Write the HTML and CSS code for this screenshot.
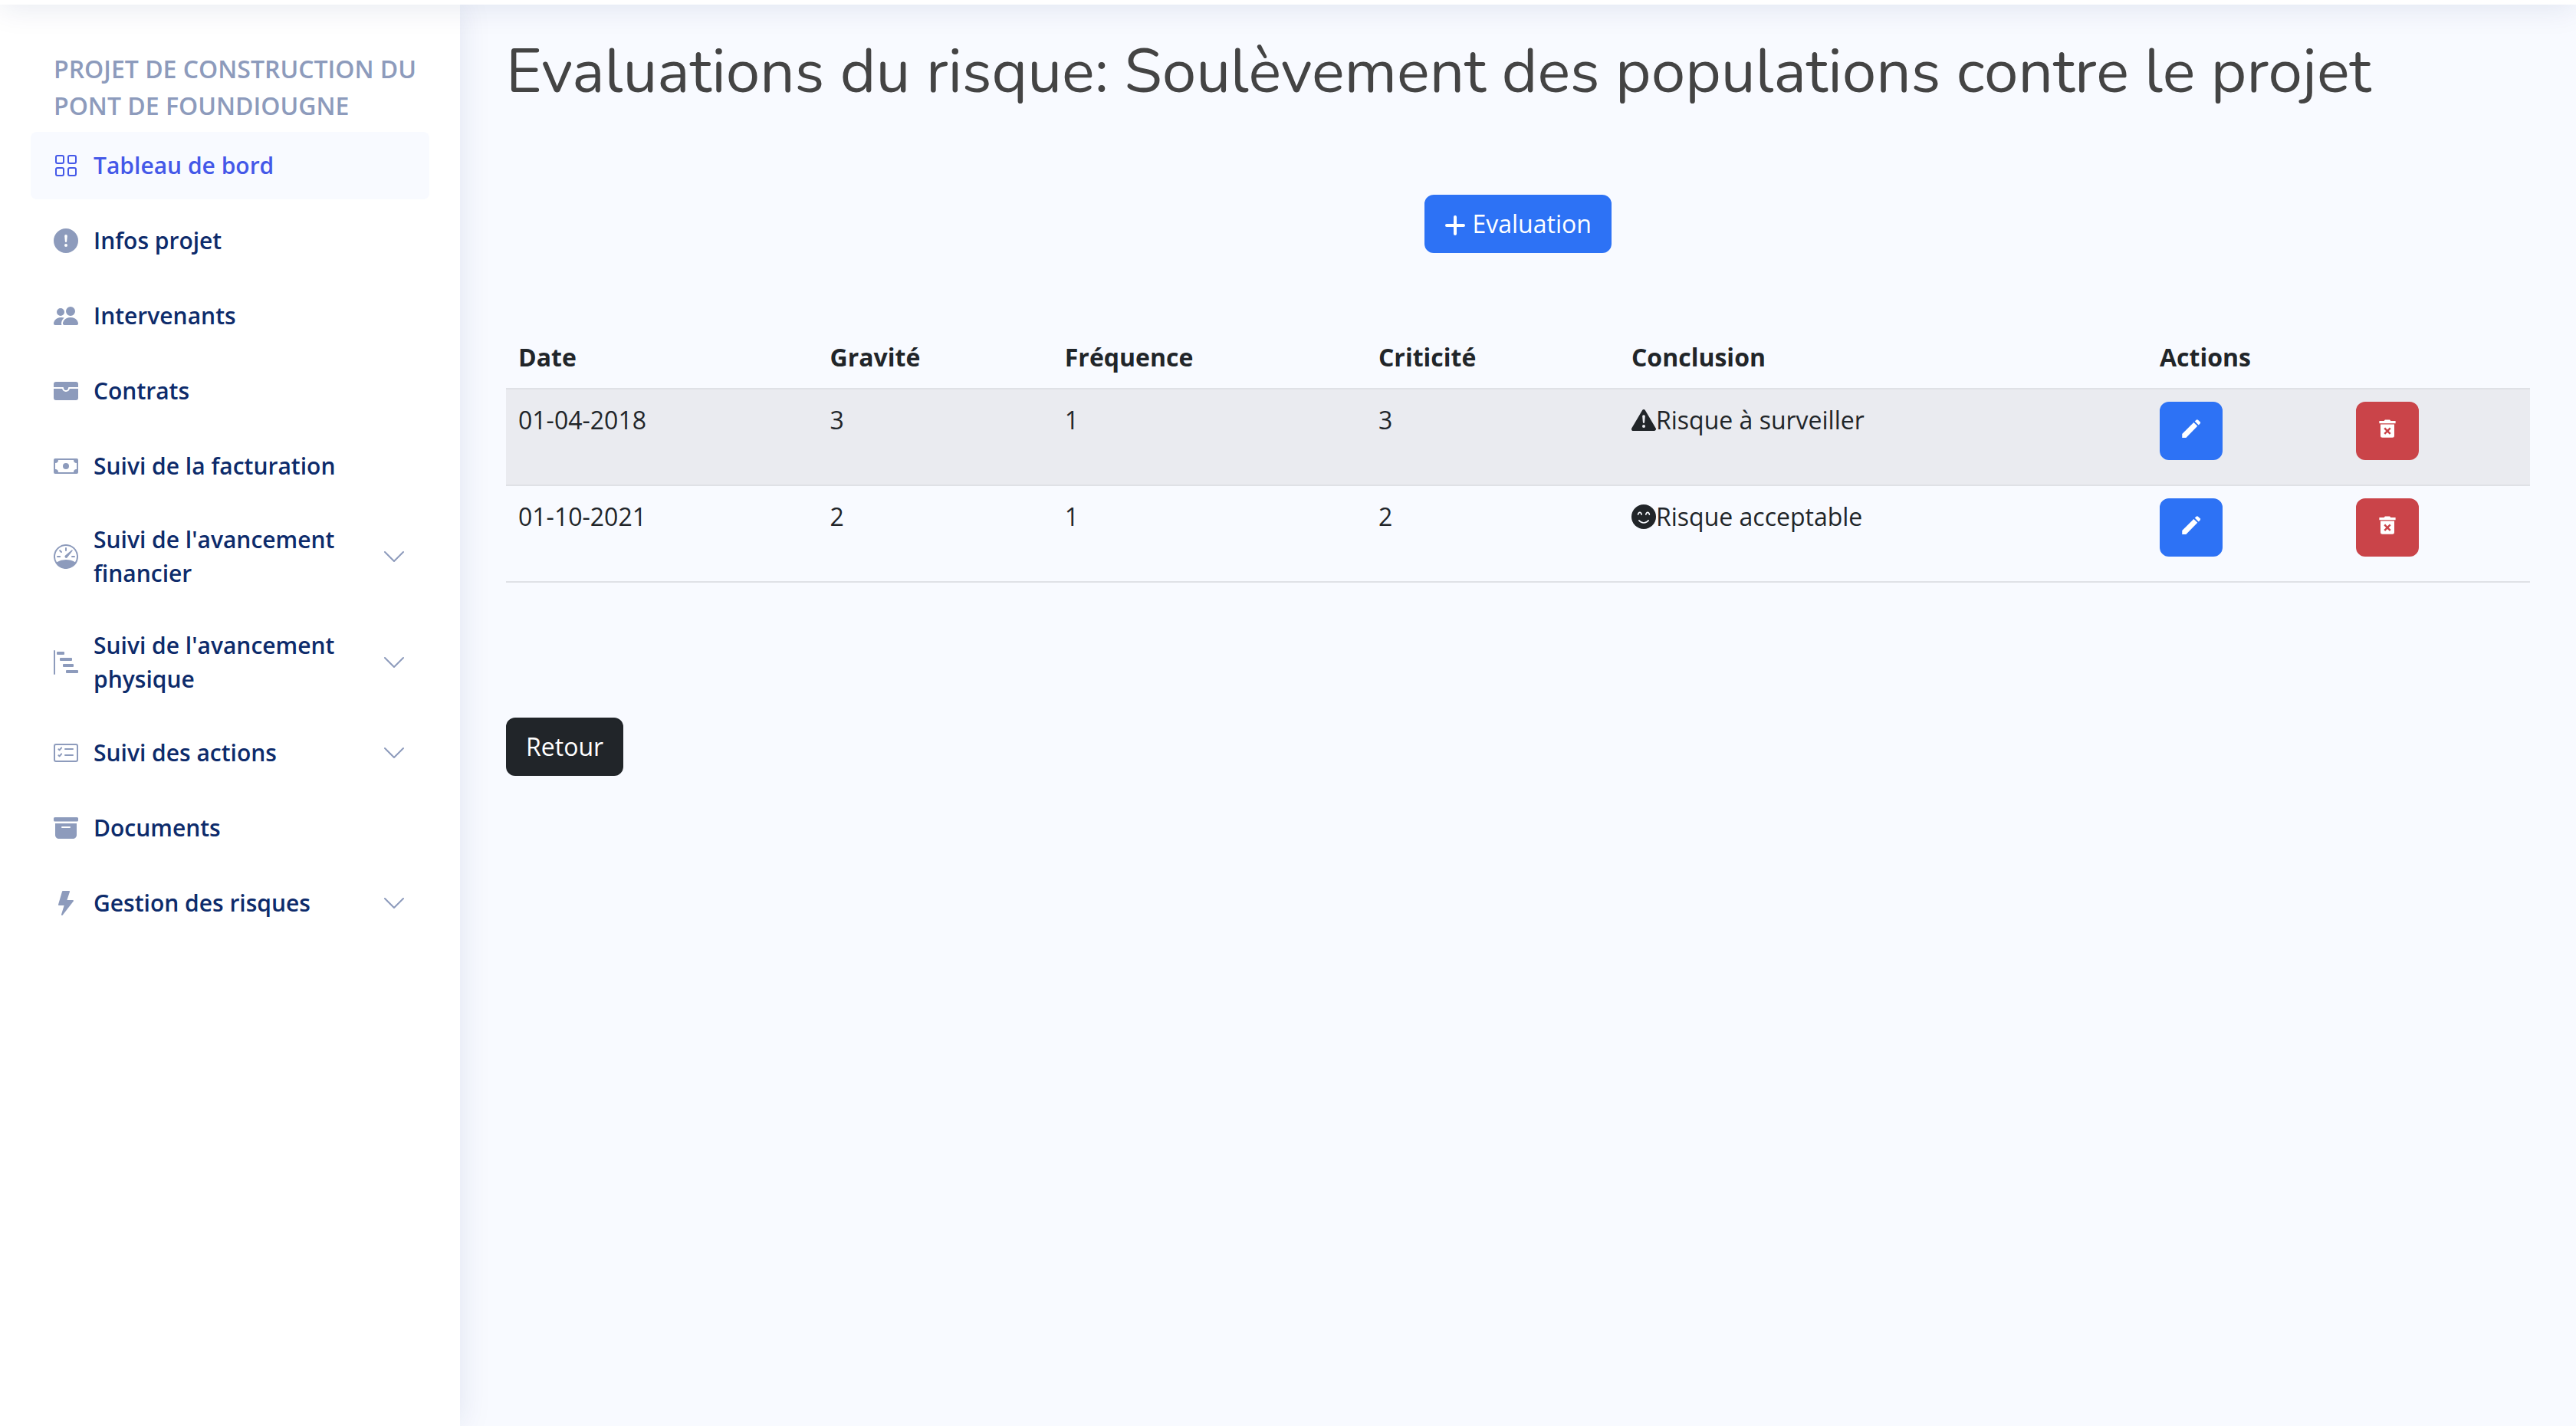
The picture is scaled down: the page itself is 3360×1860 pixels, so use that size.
FILE: index.html
```html
<!DOCTYPE html>
<html lang="fr">
<head>
	<meta charset="UTF-8" />
	<meta name="viewport" content="width=device-width, initial-scale=1.0" />
	<title>Evaluations du risque</title>
	<link rel="stylesheet" href="styles.css">
</head>
<body>
	<!-- shared icons -->
	<svg class="sprite" aria-hidden="true">
		<symbol id="chevron-down" viewBox="0 0 16 16">
			<path fill="none" stroke="currentColor" stroke-linecap="round" stroke-linejoin="round" d="M2 5l6 6 6-6" />
		</symbol>
		<symbol id="pencil" viewBox="0 0 24 24">
			<path d="M14.700 5.500L2.600 17.500V21.500h4.100L18.600 9.400z" />
			<path d="M15.800 4.400l1.600-1.500q.9-.8 1.800 0l2.100 2.100q.8.900 0 1.800l-1.500 1.500z" />
		</symbol>
		<symbol id="trash" viewBox="0 0 24 24">
			<path d="M3.500 4h5l1-1.200h5l1 1.200h5v2.600h-17z" />
			<path fill-rule="evenodd" d="M4.800 7.600h14.400v11.800a2 2 0 0 1-2 2H6.800a2 2 0 0 1-2-2zM8.300 12.200l2.300 2.300-2.300 2.300 1.400 1.400 2.300-2.300 2.300 2.300 1.400-1.400-2.300-2.300 2.300-2.300-1.400-1.400-2.300 2.300-2.300-2.300z" />
		</symbol>
	</svg>

	<header class="header"></header>

	<div class="wrapper">
		<aside class="sidebar">
			<h2 class="nav-heading">Projet de construction du pont de Foundiougne</h2>
			<nav class="sidebar-nav">
				<a class="nav-link active" href="#">
					<svg class="icon" viewBox="0 0 16 16"><g fill="none" stroke="currentColor"><rect x="1.500" y="1.500" width="5" height="5" rx="1" /><rect x="9.500" y="1.500" width="5" height="5" rx="1" /><rect x="1.500" y="9.500" width="5" height="5" rx="1" /><rect x="9.500" y="9.500" width="5" height="5" rx="1" /></g></svg>
					<span>Tableau de bord</span>
				</a>
				<a class="nav-link" href="#">
					<svg class="icon" viewBox="0 0 16 16"><path d="M16 8A8 8 0 1 1 0 8a8 8 0 0 1 16 0M8 4a.905.905 0 0 0-.9.995l.35 3.507a.552.552 0 0 0 1.100 0l.350-3.507A.905.905 0 0 0 8 4m.002 6a1 1 0 1 0 0 2 1 1 0 0 0 0-2" /></svg>
					<span>Infos projet</span>
				</a>
				<a class="nav-link" href="#">
					<svg class="icon" viewBox="0 0 16 16"><path d="M7 14s-1 0-1-1 1-4 5-4 5 3 5 4-1 1-1 1zm4-6a3 3 0 1 0 0-6 3 3 0 0 0 0 6m-5.784 6A2.240 2.240 0 0 1 5 13c0-1.355.680-2.750 1.936-3.720A6.300 6.300 0 0 0 5 9c-4 0-5 3-5 4s1 1 1 1zM4.500 8a2.500 2.500 0 1 0 0-5 2.500 2.500 0 0 0 0 5" /></svg>
					<span>Intervenants</span>
				</a>
				<a class="nav-link" href="#">
					<svg class="icon" viewBox="0 0 16 16"><path d="M1.500 2A1.500 1.500 0 0 0 0 3.500v2h6a.5.5 0 0 1 .5.5c0 .253.080.644.306.958.207.288.557.542 1.194.542s.987-.254 1.194-.542c.226-.314.306-.705.306-.958a.5.5 0 0 1 .5-.5h6v-2A1.500 1.500 0 0 0 14.500 2z" /><path d="M16 6.500h-5.551a2.700 2.700 0 0 1-.443 1.042C9.613 8.088 8.963 8.500 8 8.500s-1.613-.412-2.006-.958A2.700 2.700 0 0 1 5.551 6.500H0v6A1.500 1.500 0 0 0 1.500 14h13a1.500 1.500 0 0 0 1.500-1.500z" /></svg>
					<span>Contrats</span>
				</a>
				<a class="nav-link" href="#">
					<svg class="icon" viewBox="0 0 16 16"><path d="M8 10a2 2 0 1 0 0-4 2 2 0 0 0 0 4" /><path d="M0 4a1 1 0 0 1 1-1h14a1 1 0 0 1 1 1v8a1 1 0 0 1-1 1H1a1 1 0 0 1-1-1zm3 0a2 2 0 0 1-2 2v4a2 2 0 0 1 2 2h10a2 2 0 0 1 2-2V6a2 2 0 0 1-2-2z" /></svg>
					<span>Suivi de la facturation</span>
				</a>
				<a class="nav-link" href="#">
					<svg class="icon" viewBox="0 0 16 16"><path d="M8 2a.5.5 0 0 1 .5.5V4a.5.5 0 0 1-1 0V2.500A.5.5 0 0 1 8 2M3.732 3.732a.5.5 0 0 1 .707 0l.915.914a.5.5 0 1 1-.708.708l-.914-.915a.5.5 0 0 1 0-.707M2 8a.5.5 0 0 1 .5-.5h1.586a.5.5 0 0 1 0 1H2.500A.5.5 0 0 1 2 8m9.500 0a.5.5 0 0 1 .5-.5h1.500a.5.5 0 0 1 0 1H12a.5.5 0 0 1-.5-.5m.754-4.246a.390.390 0 0 0-.527-.020L7.547 7.310A.910.910 0 1 0 8.850 8.569l3.434-4.297a.390.390 0 0 0-.029-.518z" /><path fill-rule="evenodd" d="M6.664 15.889A8 8 0 1 1 9.336.110a8 8 0 0 1-2.672 15.780zm-4.665-4.283A11.950 11.950 0 0 1 8 10c2.186 0 4.236.585 6.001 1.606a7 7 0 1 0-12.002 0" /></svg>
					<span>Suivi de l'avancement financier</span>
					<svg class="icon chevron"><use href="#chevron-down" /></svg>
				</a>
				<a class="nav-link" href="#">
					<svg class="icon" viewBox="0 0 16 16"><path d="M.5 0a.5.5 0 0 1 .5.5v15a.5.5 0 0 1-1 0V.5A.5.5 0 0 1 .5 0" /><rect x="2" y="1" width="5" height="2" rx=".5" /><rect x="4" y="5" width="8" height="2" rx=".5" /><rect x="6" y="9" width="7" height="2" rx=".5" /><rect x="8" y="13" width="8" height="2" rx=".5" /></svg>
					<span>Suivi de l'avancement physique</span>
					<svg class="icon chevron"><use href="#chevron-down" /></svg>
				</a>
				<a class="nav-link" href="#">
					<svg class="icon" viewBox="0 0 16 16"><g fill="none" stroke="currentColor" stroke-linecap="round" stroke-linejoin="round"><rect x=".5" y="2.500" width="15" height="11" rx="1" /><path d="M7.500 5.500h5M7.500 9.500h5M3.200 5.600l.6.600 1.300-1.500M3.200 9.600l.6.600 1.300-1.500" /></g></svg>
					<span>Suivi des actions</span>
					<svg class="icon chevron"><use href="#chevron-down" /></svg>
				</a>
				<a class="nav-link" href="#">
					<svg class="icon" viewBox="0 0 16 16"><path d="M12.643 15C13.979 15 15 13.845 15 12.500V5H1v7.500C1 13.845 2.021 15 3.357 15zM5.500 7h5a.5.5 0 0 1 0 1h-5a.5.5 0 0 1 0-1M.8 1a.8.8 0 0 0-.8.8V3a.8.8 0 0 0 .8.8h14.400A.8.8 0 0 0 16 3V1.800a.8.8 0 0 0-.8-.8z" /></svg>
					<span>Documents</span>
				</a>
				<a class="nav-link" href="#">
					<svg class="icon" viewBox="0 0 16 16"><path d="M5.520.359A.5.5 0 0 1 6 0h4a.5.5 0 0 1 .474.658L8.694 6H12.500a.5.5 0 0 1 .395.807l-7 9a.5.5 0 0 1-.873-.454L6.823 9.500H3.500a.5.5 0 0 1-.480-.641z" /></svg>
					<span>Gestion des risques</span>
					<svg class="icon chevron"><use href="#chevron-down" /></svg>
				</a>
			</nav>
		</aside>

		<main class="main">
			<h1>Evaluations du risque: Soulèvement des populations contre le projet</h1>

			<div class="toolbar">
				<button class="btn btn-primary" type="button"><svg class="icon-plus" viewBox="0 0 14 14"><path fill="none" stroke="currentColor" stroke-width="2" stroke-linecap="round" d="M7 1.500v11M1.500 7h11" /></svg> Evaluation</button>
			</div>

			<table class="table">
				<colgroup>
					<col class="col-date">
					<col class="col-gravite">
					<col class="col-frequence">
					<col class="col-criticite">
					<col class="col-conclusion">
					<col class="col-edit">
					<col class="col-delete">
				</colgroup>
				<thead>
					<tr>
						<th>Date</th>
						<th>Gravité</th>
						<th>Fréquence</th>
						<th>Criticité</th>
						<th>Conclusion</th>
						<th colspan="2">Actions</th>
					</tr>
				</thead>
				<tbody>
					<tr>
						<td>01-04-2018</td>
						<td>3</td>
						<td>1</td>
						<td>3</td>
						<td><svg class="icon-risk" viewBox="0 0 16 16"><path d="M8.982 1.566a1.130 1.130 0 0 0-1.960 0L.165 13.233c-.457.778.091 1.767.980 1.767h13.713c.889 0 1.438-.990.980-1.767zM8 4.600c.535 0 .954.462.9.995l-.350 3.907a.552.552 0 0 1-1.100 0L7.100 5.595A.905.905 0 0 1 8 4.600m.002 6.400a1 1 0 1 1 0 2 1 1 0 0 1 0-2" /></svg>Risque à surveiller</td>
						<td><button class="btn btn-primary" type="button" aria-label="Modifier"><svg class="icon-action"><use href="#pencil" /></svg></button></td>
						<td><button class="btn btn-danger" type="button" aria-label="Supprimer"><svg class="icon-action"><use href="#trash" /></svg></button></td>
					</tr>
					<tr>
						<td>01-10-2021</td>
						<td>2</td>
						<td>1</td>
						<td>2</td>
						<td><svg class="icon-risk" viewBox="0 0 16 16"><circle cx="8" cy="8" r="8" /><g fill="none" stroke="#f8faff" stroke-linecap="round"><path stroke-width=".8" d="M4.300 6.600c.3-1.900 2-1.900 2.300 0M9.400 6.600c.3-1.900 2-1.900 2.300 0" /><path stroke-width=".8" d="M4.900 10.400c1.500 2.100 4.700 2.100 6.200 0" /></g></svg>Risque acceptable</td>
						<td><button class="btn btn-primary" type="button" aria-label="Modifier"><svg class="icon-action"><use href="#pencil" /></svg></button></td>
						<td><button class="btn btn-danger" type="button" aria-label="Supprimer"><svg class="icon-action"><use href="#trash" /></svg></button></td>
					</tr>
				</tbody>
			</table>

			<button class="btn btn-dark" type="button">Retour</button>
		</main>
	</div>
</body>
</html>
```
FILE: styles.css
```css
* {
	box-sizing: border-box;
}

body {
	margin: 0;
	min-height: 100vh;
	display: flex;
	flex-direction: column;
	font-family: "Open Sans", sans-serif;
	font-size: 32px;
	line-height: 48px;
	color: #212529;
	background: #f8faff;
}

svg {
	fill: currentColor;
}

.sprite {
	display: none;
}

/* Header, tucked up so that only its lower edge and shadow show */
.header {
	position: relative;
	z-index: 2;
	flex: none;
	height: 120px;
	margin-top: -114px;
	background: #fff;
	box-shadow: 0 4px 40px rgba(1, 41, 112, 0.1);
}

.wrapper {
	flex: 1;
	display: flex;
}

/* Sidebar */
.sidebar {
	flex: 0 0 600px;
	padding: 60px 40px 40px;
	background: #fff;
	box-shadow: 0 0 40px rgba(1, 41, 112, 0.1);
}

.nav-heading {
	margin: 0 0 10px;
	padding-left: 30px;
	font-size: 32px;
	font-weight: 600;
	text-transform: uppercase;
	color: #8d9bbc;
}

.sidebar-nav {
	display: flex;
	flex-direction: column;
	gap: 10px;
}

.nav-link {
	display: flex;
	align-items: center;
	min-height: 88px;
	padding: 20px 30px;
	border-radius: 8px;
	font-size: 30px;
	font-weight: 600;
	line-height: 44px;
	color: #0d2b6b;
	text-decoration: none;
}

.nav-link.active {
	color: #4458e8;
	background: #f8faff;
}

.icon {
	flex: none;
	width: 32px;
	height: 32px;
	margin-right: 20px;
	color: #8d9bbc;
}

.nav-link.active .icon {
	color: #4458e8;
}

.icon.chevron {
	margin: 0 0 0 auto;
}

/* Content */
.main {
	flex: 1;
	padding: 40px 60px;
}

h1 {
	margin: 0 0 112px;
	font-family: Nunito, "Open Sans", sans-serif;
	font-size: 80px;
	font-weight: 400;
	line-height: 96px;
	color: #444;
}

.toolbar {
	display: flex;
	justify-content: center;
	margin-bottom: 96px;
}

.btn {
	padding: 12px 24px;
	border: 2px solid transparent;
	border-radius: 12px;
	font: inherit;
	color: #fff;
	cursor: pointer;
}

.btn-primary {
	background-color: #2d72f5;
	border-color: #2d72f5;
}

.btn-danger {
	background-color: #ca4449;
	border-color: #ca4449;
}

.btn-dark {
	background-color: #212529;
	border-color: #212529;
}

.icon-plus {
	width: 28px;
	height: 28px;
	vertical-align: -4px;
}

.icon-action {
	width: 30px;
	height: 30px;
}

.icon-risk {
	width: 32px;
	height: 32px;
	vertical-align: -4px;
}

/* Table */
.table {
	width: 100%;
	margin-bottom: 176px;
	border-collapse: collapse;
	table-layout: fixed;
}

.col-date { width: 15.4%; }
.col-gravite { width: 11.6%; }
.col-frequence { width: 15.5%; }
.col-criticite { width: 12.5%; }
.col-conclusion { width: 26.1%; }
.col-edit { width: 9.7%; }
.col-delete { width: 9.2%; }

.table th,
.table td {
	padding: 16px;
	border-bottom: 2px solid #dfe1e6;
	text-align: left;
	vertical-align: top;
}

.table td .btn {
	display: block;
	margin-bottom: 16px;
}

.table tbody tr:nth-child(odd) {
	background: #eaebf0;
}
```
